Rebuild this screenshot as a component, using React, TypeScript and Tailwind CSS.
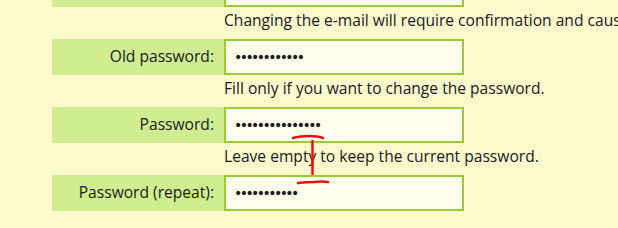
import React from 'react';

interface Field {
  label: string;
  dots: number;
  help?: string;
}

// first row sits mostly above the fold; only the bottom edge shows
const FIELDS: Field[] = [
  {
    label: '',
    dots: 0,
    help: 'Changing the e-mail will require confirmation and cause a logout.',
  },
  { label: 'Old password:', dots: 12, help: 'Fill only if you want to change the password.' },
  { label: 'Password:', dots: 15, help: 'Leave empty to keep the current password.' },
  { label: 'Password (repeat):', dots: 11 },
];

function Row({ field }: { field: Field }) {
  return (
    <>
      <div className="flex h-[36px] items-center justify-end bg-[#d0ed8f] pr-[10px]">
        {field.label}
      </div>
      <div className="flex h-[36px] w-[240px] items-center border-2 border-[#9acb34] bg-[#fffdec] pl-[8px]">
        <span className="font-['DejaVu_Sans',sans-serif] text-[14px] leading-none tracking-[-2.55px]">
          {'•'.repeat(field.dots)}
        </span>
      </div>
      {field.help && (
        <>
          <div className="h-[32px]" />
          <div className="h-[32px] whitespace-nowrap pt-[2px]">{field.help}</div>
        </>
      )}
    </>
  );
}

export default function App() {
  return (
    <div className="relative h-[228px] w-[618px] overflow-hidden bg-[#fdf9cd] font-['Open_Sans',sans-serif] text-[15.6px] text-[#1a1a22]">
      <div className="-mt-[29px] ml-[52px] grid grid-cols-[172px_1fr]">
        {FIELDS.map((f, i) => (
          <Row key={i} field={f} />
        ))}
      </div>

      {/* hand-drawn red marker */}
      <svg className="pointer-events-none absolute left-0 top-0" width="618" height="228">
        <path d="M293 138 Q300 136 310 136 Q318 136 323 138" stroke="#e8120c" strokeWidth="2.5" fill="none" strokeLinecap="round" />
        <path d="M312.5 141 L312.5 174" stroke="#e8120c" strokeWidth="2.5" fill="none" strokeLinecap="round" />
        <path d="M298 183 Q306 182 314 182 Q322 181 328 182" stroke="#e8120c" strokeWidth="2.5" fill="none" strokeLinecap="round" />
      </svg>
    </div>
  );
}
